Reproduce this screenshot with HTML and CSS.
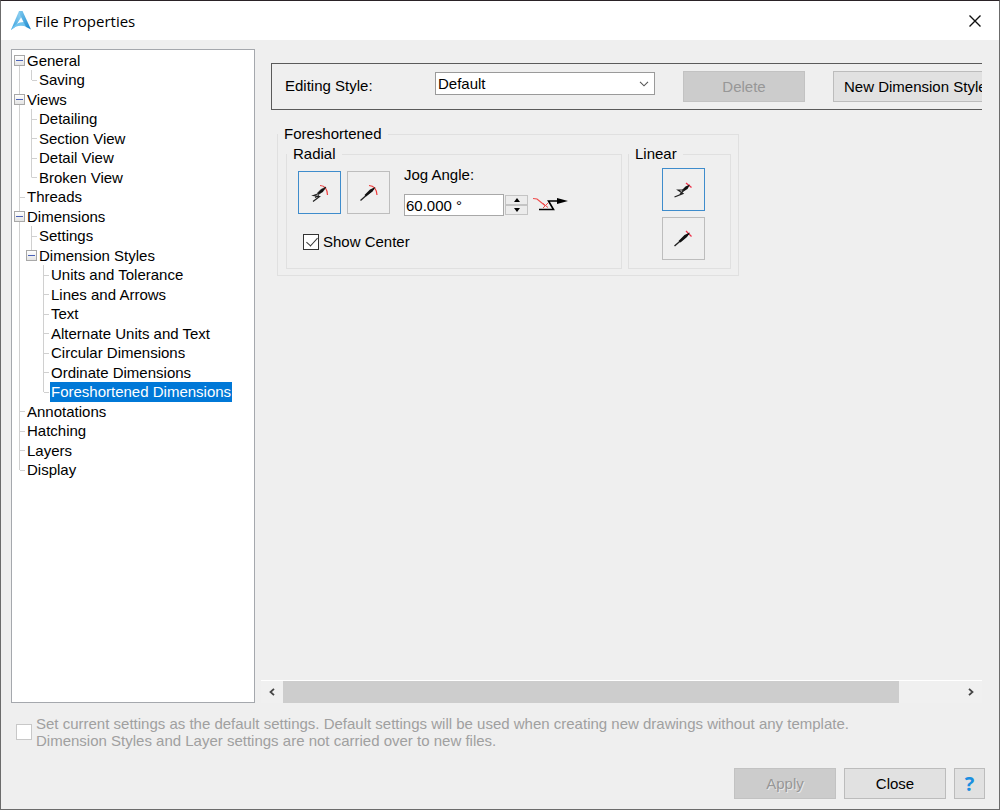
FILE: index.html
```html
<!DOCTYPE html>
<html lang="en">
<head>
  <meta charset="UTF-8">
  <meta name="viewport" content="width=device-width, initial-scale=1.0">
  <title>File Properties</title>
  <link rel="stylesheet" href="styles.css">
</head>
<body>
  <div class="window">
    <header class="titlebar">
      <svg class="logo" width="22" height="22" viewBox="0 0 22 22">
        <defs>
          <linearGradient id="logoLeft" x1="0" y1="1" x2="1" y2="0">
            <stop offset="0" stop-color="#2f9bdc"/>
            <stop offset="1" stop-color="#a5dcf5"/>
          </linearGradient>
          <linearGradient id="logoRight" x1="0" y1="0" x2="1" y2="1">
            <stop offset="0" stop-color="#7fcbf0"/>
            <stop offset="1" stop-color="#1583cb"/>
          </linearGradient>
        </defs>
        <path d="M9 1 L12.500 1 L12 6 L5 17 L1 20 Z" fill="url(#logoLeft)"/>
        <path d="M1 20 Q5 12 14 12 L17 17 Q8 13.500 1 20 Z" fill="#6fc3ee"/>
        <path d="M9 1 L12.500 1 L21 19.500 L16 17 L10 5 Z" fill="url(#logoRight)"/>
      </svg>
      <h1>File Properties</h1>
      <button class="close-x" aria-label="Close window">
        <svg width="14" height="14" viewBox="0 0 14 14"><path d="M1.500 1.500 L12.500 12.500 M12.500 1.500 L1.500 12.500" stroke="#111" stroke-width="1.400"/></svg>
      </button>
    </header>

    <div class="content">
      <ul class="tree">
        <li><i class="g first"><button class="fold" aria-label="Collapse General"></button></i><span>General</span></li>
        <li><i class="g line"></i><i class="g end"></i><span>Saving</span></li>
        <li><i class="g line"><button class="fold" aria-label="Collapse Views"></button></i><span>Views</span></li>
        <li><i class="g line"></i><i class="g tee"></i><span>Detailing</span></li>
        <li><i class="g line"></i><i class="g tee"></i><span>Section View</span></li>
        <li><i class="g line"></i><i class="g tee"></i><span>Detail View</span></li>
        <li><i class="g line"></i><i class="g end"></i><span>Broken View</span></li>
        <li><i class="g tee"></i><span>Threads</span></li>
        <li><i class="g line"><button class="fold" aria-label="Collapse Dimensions"></button></i><span>Dimensions</span></li>
        <li><i class="g line"></i><i class="g tee"></i><span>Settings</span></li>
        <li><i class="g line"></i><i class="g end"><button class="fold" aria-label="Collapse Dimension Styles"></button></i><span>Dimension Styles</span></li>
        <li><i class="g line"></i><i class="g"></i><i class="g tee"></i><span>Units and Tolerance</span></li>
        <li><i class="g line"></i><i class="g"></i><i class="g tee"></i><span>Lines and Arrows</span></li>
        <li><i class="g line"></i><i class="g"></i><i class="g tee"></i><span>Text</span></li>
        <li><i class="g line"></i><i class="g"></i><i class="g tee"></i><span>Alternate Units and Text</span></li>
        <li><i class="g line"></i><i class="g"></i><i class="g tee"></i><span>Circular Dimensions</span></li>
        <li><i class="g line"></i><i class="g"></i><i class="g tee"></i><span>Ordinate Dimensions</span></li>
        <li><i class="g line"></i><i class="g"></i><i class="g end"></i><span class="selected">Foreshortened Dimensions</span></li>
        <li><i class="g tee"></i><span>Annotations</span></li>
        <li><i class="g tee"></i><span>Hatching</span></li>
        <li><i class="g tee"></i><span>Layers</span></li>
        <li><i class="g end"></i><span>Display</span></li>
      </ul>

      <main class="pane">
        <div class="pane-body">
          <div class="style-bar">
            <label for="style">Editing Style:</label>
            <div class="select">
              <select id="style"><option>Default</option></select>
              <svg width="10" height="6" viewBox="0 0 10 6"><path d="M1 .8 L5 4.800 L9 .8" fill="none" stroke="#555" stroke-width="1.100"/></svg>
            </div>
            <button class="btn delete" disabled>Delete</button>
            <button class="btn new-style">New Dimension Style</button>
          </div>

          <fieldset class="foreshortened">
            <legend>Foreshortened</legend>
            <div class="groups">
              <fieldset class="radial">
                <legend>Radial</legend>
                <div class="radial-body">
                  <div class="radial-row">
                    <button class="tile active" aria-label="Jogged radial">
                      <svg width="24" height="24" viewBox="0 0 24 24">
                        <path d="M12 4.500 Q19 4.500 19.500 14" fill="none" stroke="#ef3b3b" stroke-width="1.200"/>
                        <path d="M18 6 L15 10.500 L10.500 13.500 L9.500 12 L13 8.500 Z" fill="#111" stroke="#111" stroke-width=".6"/>
                        <path d="M11 12.500 L5.500 14.500 L11.500 15.500 L5 20.500 M7 16.500 L11 14.500" fill="none" stroke="#222" stroke-width="1.200"/>
                      </svg>
                    </button>
                    <button class="tile" aria-label="Straight radial">
                      <svg width="24" height="24" viewBox="0 0 24 24">
                        <path d="M12 4.500 Q19.500 5 20 14" fill="none" stroke="#ef3b3b" stroke-width="1.200"/>
                        <path d="M3.500 19.500 L17 7.500" stroke="#222" stroke-width="1.400"/>
                        <path d="M18.500 6 L15.500 10.500 L9 15.500 L7.500 14 L13 8.500 Z" fill="#111"/>
                      </svg>
                    </button>
                    <div class="angle">
                      <label for="angle">Jog Angle:</label>
                      <div class="angle-row">
                        <input id="angle" type="text" value="60.000 °">
                        <div class="spinner">
                          <button aria-label="Increase"><svg width="6" height="4" viewBox="0 0 6 4"><path d="M3 0 L6 4 L0 4 Z"/></svg></button>
                          <button aria-label="Decrease"><svg width="6" height="4" viewBox="0 0 6 4"><path d="M0 0 L6 0 L3 4 Z"/></svg></button>
                        </div>
                        <svg class="jog" width="35" height="18" viewBox="0 0 35 18">
                          <path d="M0 2.500 L4 3 L12 9.500" fill="none" stroke="#ef4a4a" stroke-width="1.100"/>
                          <path d="M10 7.500 L15 11.500 M15 7 L10 12" stroke="#ef4a4a"/>
                          <path d="M6 13.500 L20.500 13.500 L15.500 5 L26 5" fill="none" stroke="#000" stroke-width="1.600"/>
                          <path d="M24 2 L35 5 L24 8 Z"/>
                        </svg>
                      </div>
                    </div>
                  </div>
                  <div class="check">
                    <input type="checkbox" id="center" checked>
                    <label for="center">Show Center</label>
                  </div>
                </div>
              </fieldset>

              <fieldset class="linear">
                <legend>Linear</legend>
                <div class="linear-body">
                  <button class="tile active" aria-label="Jogged linear">
                    <svg width="24" height="24" viewBox="0 0 24 24">
                      <path d="M14 5 L19.500 9.500" stroke="#ee3048" stroke-width="1.300"/>
                      <path d="M18 6.500 L15.500 11 L11.500 13.500 L10 12 L13.500 8.500 Z" fill="#111"/>
                      <path d="M12 12 L6 12 L11 15.500 L2.500 19 M8 16.500 L11.500 12.500" fill="none" stroke="#222" stroke-width="1.200"/>
                    </svg>
                  </button>
                  <button class="tile" aria-label="Straight linear">
                    <svg width="24" height="24" viewBox="0 0 24 24">
                      <path d="M14 4 L19.500 9.500" stroke="#ee3048" stroke-width="1.300"/>
                      <path d="M2.500 19 L17 6.500" stroke="#222" stroke-width="1.400"/>
                      <path d="M18 5.500 L15 10 L8.500 15.500 L6.500 14 L12.500 8 Z" fill="#111"/>
                    </svg>
                  </button>
                </div>
              </fieldset>
            </div>
          </fieldset>
        </div>

        <div class="scrollbar">
          <button aria-label="Scroll left"><svg width="6" height="8" viewBox="0 0 6 8"><path d="M5 .8 L1.500 4 L5 7.200" fill="none" stroke="#444" stroke-width="1.800"/></svg></button>
          <div class="track"><div class="thumb"></div></div>
          <button aria-label="Scroll right"><svg width="6" height="8" viewBox="0 0 6 8"><path d="M1 .8 L4.500 4 L1 7.200" fill="none" stroke="#444" stroke-width="1.800"/></svg></button>
        </div>
      </main>
    </div>

    <div class="defaults">
      <input type="checkbox" id="defaults" disabled>
      <label for="defaults">Set current settings as the default settings. Default settings will be used when creating new drawings without any template.<br>Dimension Styles and Layer settings are not carried over to new files.</label>
    </div>

    <footer class="actions">
      <button class="btn apply" disabled>Apply</button>
      <button class="btn close">Close</button>
      <button class="btn help" aria-label="Help">?</button>
    </footer>
  </div>
</body>
</html>
```
FILE: styles.css
```css
* {
  box-sizing: border-box;
}

body {
  margin: 0;
  font-family: "Liberation Sans", Arial, sans-serif;
  font-size: 15px;
  line-height: 18px;
  color: #000;
}

button, input, select {
  font: inherit;
  color: inherit;
  margin: 0;
  padding: 0;
  border-radius: 0;
}

svg {
  display: block;
}

.window {
  display: flex;
  flex-direction: column;
  min-height: 100vh;
  background: #efefef;
  border: 1px solid #6b6b6b;
  border-top-color: #2a2226;
}

/* Title bar */
.titlebar {
  display: flex;
  align-items: center;
  height: 39px;
  padding: 0 17px 0 9px;
  background: #fff;
}

.titlebar h1 {
  flex: 1;
  margin: 0 0 0 3px;
  font-family: "Open Sans", "Noto Sans", sans-serif;
  font-size: 15px;
  font-weight: normal;
}

.close-x {
  border: 0;
  background: none;
}

/* Main area */
.content {
  flex: 1;
  display: flex;
  gap: 6px;
  padding: 9px 17px 0 10px;
}

/* Tree */
.tree {
  flex: none;
  width: 244px;
  margin: 0;
  padding: 1px 2px;
  list-style: none;
  background: #fff;
  border: 1px solid #a5a8ad;
  display: grid;
  grid-auto-rows: 19px 20px;
  align-content: start;
}

.tree li {
  display: flex;
  align-items: stretch;
}

.tree span {
  padding: 0 1px;
  line-height: 19px;
  white-space: nowrap;
}

.tree .selected {
  background: #0078d7;
  color: #fff;
}

.g {
  flex: none;
  width: 12px;
  display: flex;
  align-items: center;
  background-repeat: no-repeat;
}

.line {
  background-image: linear-gradient(#d0d0d0, #d0d0d0);
  background-size: 1px 100%;
  background-position: 5px 0;
}

.first {
  background-image: linear-gradient(#d0d0d0, #d0d0d0);
  background-size: 1px 50%;
  background-position: 5px 100%;
}

.tee {
  background-image: linear-gradient(#d0d0d0, #d0d0d0), linear-gradient(#d0d0d0, #d0d0d0);
  background-size: 1px 100%, 5px 1px;
  background-position: 5px 0, 6px 50%;
}

.end {
  background-image: linear-gradient(#d0d0d0, #d0d0d0), linear-gradient(#d0d0d0, #d0d0d0);
  background-size: 1px 50%, 5px 1px;
  background-position: 5px 0, 6px 50%;
}

.fold {
  width: 11px;
  height: 11px;
  border: 1px solid #a8a8a8;
  background: linear-gradient(#4a62b8, #4a62b8) 1px 4px / 7px 1px no-repeat, linear-gradient(#fff, #e4e4e4);
}

/* Right pane */
.pane {
  flex: 1;
  min-width: 0;
  display: flex;
  flex-direction: column;
}

.pane-body {
  flex: 1;
  padding: 14px 0 0 10px;
  overflow: hidden;
}

.style-bar {
  display: flex;
  align-items: center;
  height: 47px;
  padding-left: 13px;
  border: 1px solid #5a5a5a;
  border-right: 0;
  white-space: nowrap;
  overflow: hidden;
}

.style-bar label {
  flex: none;
  width: 150px;
  margin-bottom: 2px;
}

.select {
  flex: none;
  position: relative;
  width: 220px;
  margin: 0 28px 6px 0;
}

.select select {
  display: block;
  width: 100%;
  height: 23px;
  padding-left: 2px;
  appearance: none;
  background: #fff;
  border: 1px solid #9a9a9a;
}

.select svg {
  position: absolute;
  right: 6px;
  top: 9px;
  pointer-events: none;
}

.btn {
  flex: none;
  height: 31px;
  background: #e1e1e1;
  border: 1px solid #bcbcbc;
}

.btn:disabled {
  background: #cccccc;
  border-color: #c2c2c2;
  color: #979797;
}

.delete {
  width: 122px;
  margin-right: 28px;
}

.new-style {
  width: 180px;
  padding-left: 10px;
  text-align: left;
}

/* Group boxes */
fieldset {
  margin: 0;
  padding: 0;
  min-width: 0;
  border: 1px solid #e0e0e0;
}

legend {
  padding: 0 6px;
}

.foreshortened {
  width: 462px;
  margin: 15px 0 0 6px;
}

.groups {
  display: flex;
  gap: 6px;
  padding: 2px 7px 6px 8px;
}

.radial {
  flex: 1;
}

.linear {
  width: 103px;
}

.radial-body {
  padding: 3px 11px 17px;
}

.radial-row {
  display: flex;
  align-items: flex-end;
  gap: 6px;
  margin-bottom: 17px;
}

.linear-body {
  display: flex;
  flex-direction: column;
  align-items: flex-start;
  gap: 6px;
  padding: 5px 0 7px 33px;
}

.tile {
  flex: none;
  display: flex;
  align-items: center;
  justify-content: center;
  width: 43px;
  height: 43px;
  background: #efefef;
  border: 1px solid #bdbdbd;
}

.tile.active {
  border-color: #3e8ccc;
}

.radial-row .tile {
  margin-bottom: 2px;
}

.angle {
  display: flex;
  flex-direction: column;
  gap: 10px;
  margin-left: 8px;
}

.angle-row {
  display: flex;
  align-items: center;
}

.angle-row input {
  width: 100px;
  height: 22px;
  padding: 0 1px;
  background: #fff;
  border: 1px solid #a8a8a8;
}

.spinner {
  display: flex;
  flex-direction: column;
  margin: 0 5px 0 1px;
}

.spinner button {
  display: flex;
  align-items: center;
  justify-content: center;
  width: 23px;
  height: 10px;
  background: #ececec;
  border: 1px solid #c4c4c4;
}

.check {
  display: flex;
  align-items: center;
  gap: 4px;
  padding-left: 5px;
}

input[type="checkbox"] {
  appearance: none;
  flex: none;
  width: 16px;
  height: 16px;
  background: #fff;
  border: 1px solid #333;
}

input[type="checkbox"]:checked::before {
  content: "";
  display: block;
  width: 5px;
  height: 10px;
  margin: 0 0 0 5px;
  border: solid #333;
  border-width: 0 1px 1px 0;
  transform: rotate(42deg);
}

input[type="checkbox"]:disabled {
  border-color: #c8c8c8;
}

/* Horizontal scrollbar */
.scrollbar {
  display: flex;
  height: 23px;
  border-top: 1px solid #fff;
  background: #f0f0f0;
}

.scrollbar button {
  display: flex;
  align-items: center;
  justify-content: center;
  width: 22px;
  border: 0;
  background: none;
}

.track {
  flex: 1;
}

.thumb {
  width: 91%;
  height: 100%;
  background: #cdcdcd;
}

/* Bottom */
.defaults {
  display: flex;
  align-items: center;
  gap: 4px;
  padding: 12px 15px 0;
  line-height: 17px;
  color: #a0a0a0;
}

.actions {
  display: flex;
  justify-content: flex-end;
  gap: 8px;
  padding: 19px 14px 10px;
}

.apply, .close {
  width: 102px;
}

.apply {
  text-shadow: 1px 1px #e8e8e8;
}

.help {
  width: 31px;
  font-family: "Open Sans", sans-serif;
  font-size: 20px;
  font-weight: bold;
  color: #1b8fe0;
}
```
